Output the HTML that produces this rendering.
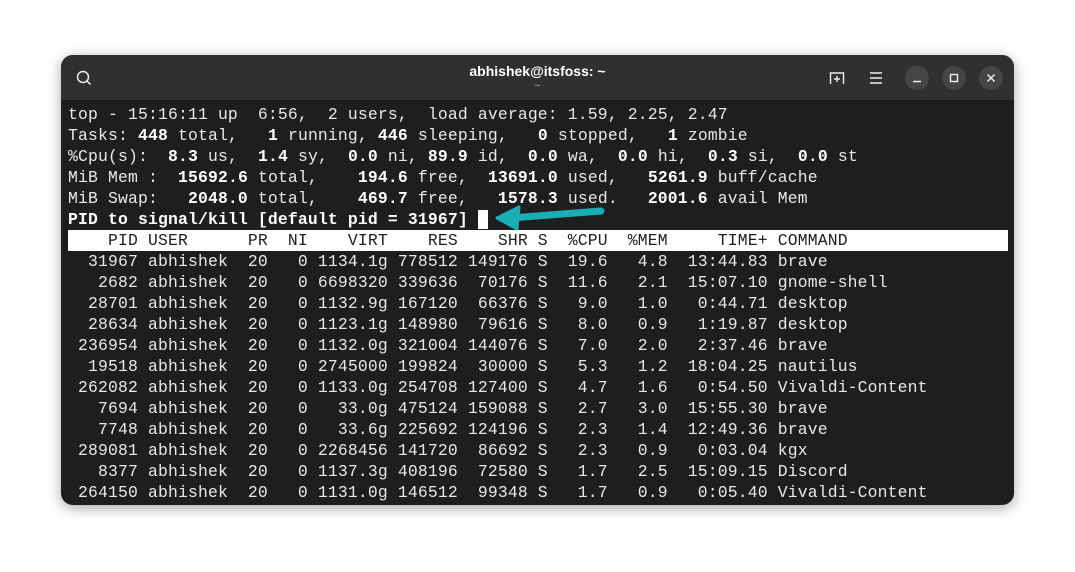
<!DOCTYPE html>
<html><head><style>
body{margin:0;width:1075px;height:572px;background:#fff;position:relative;overflow:hidden}
.win{position:absolute;left:61px;top:55px;width:953px;height:450px;background:#1e1e1e;border-radius:12px;overflow:hidden;box-shadow:0 3px 14px rgba(0,0,0,.35)}
.tb{position:absolute;left:0;top:0;right:0;height:45px;background:#303030}
.title{position:absolute;left:0;right:0;top:8px;text-align:center;color:#fff;font:bold 14px "Liberation Sans",sans-serif}
.sub{position:absolute;left:0;right:0;top:25px;text-align:center;color:#aaa;font:11px "Liberation Sans",sans-serif}
.btn{position:absolute;top:11px;width:24px;height:24px;border-radius:50%;background:#454545}
pre{position:absolute;left:7px;top:49px;margin:0;font:16.4px/21px "Liberation Mono","DejaVu Sans Mono",monospace;letter-spacing:0.16px;color:#e8e8e8}
b{color:#fff}
.hd{background:#fff;color:#1e1e1e;display:inline-block;width:940px}
</style></head><body>
<div class="win">
<div class="tb">
<svg style="position:absolute;left:15px;top:15px" width="16" height="16"><circle cx="7" cy="7" r="5.5" fill="none" stroke="#eee" stroke-width="1.5"/><line x1="11" y1="11" x2="14.5" y2="14.5" stroke="#eee" stroke-width="1.5"/></svg>
<div class="title">abhishek@itsfoss: ~</div>
<div class="sub">~</div>
<svg style="position:absolute;left:768px;top:15px" width="16" height="16"><path d="M1.5 14V3H14.5V14M5 9H11M8 6V12" fill="none" stroke="#eee" stroke-width="1.4"/></svg>
<svg style="position:absolute;left:808px;top:16px" width="14" height="14"><path d="M1 2H13M1 7H13M1 12H13" stroke="#eee" stroke-width="1.4"/></svg>
<div class="btn" style="left:844px"><svg width="24" height="24"><path d="M8 15.5H16" stroke="#eee" stroke-width="1.5"/></svg></div>
<div class="btn" style="left:881px"><svg width="24" height="24"><rect x="8.5" y="8.5" width="7" height="7" fill="none" stroke="#eee" stroke-width="1.4"/></svg></div>
<div class="btn" style="left:918px"><svg width="24" height="24"><path d="M8.5 8.5L15.5 15.5M15.5 8.5L8.5 15.5" stroke="#eee" stroke-width="1.5"/></svg></div>
</div>
<pre>top - 15:16:11 up  6:56,  2 users,  load average: 1.59, 2.25, 2.47
Tasks: <b>448</b> total,   <b>1</b> running, <b>446</b> sleeping,   <b>0</b> stopped,   <b>1</b> zombie
%Cpu(s):  <b>8.3</b> us,  <b>1.4</b> sy,  <b>0.0</b> ni, <b>89.9</b> id,  <b>0.0</b> wa,  <b>0.0</b> hi,  <b>0.3</b> si,  <b>0.0</b> st
MiB Mem :  <b>15692.6</b> total,    <b>194.6</b> free,  <b>13691.0</b> used,   <b>5261.9</b> buff/cache
MiB Swap:   <b>2048.0</b> total,    <b>469.7</b> free,   <b>1578.3</b> used.   <b>2001.6</b> avail Mem
<b>PID to signal/kill [default pid = 31967]</b> <span style="background:#fff"> </span>
<span class="hd">    PID USER      PR  NI    VIRT    RES    SHR S  %CPU  %MEM     TIME+ COMMAND</span>
  31967 abhishek  20   0 1134.1g 778512 149176 S  19.6   4.8  13:44.83 brave
   2682 abhishek  20   0 6698320 339636  70176 S  11.6   2.1  15:07.10 gnome-shell
  28701 abhishek  20   0 1132.9g 167120  66376 S   9.0   1.0   0:44.71 desktop
  28634 abhishek  20   0 1123.1g 148980  79616 S   8.0   0.9   1:19.87 desktop
 236954 abhishek  20   0 1132.0g 321004 144076 S   7.0   2.0   2:37.46 brave
  19518 abhishek  20   0 2745000 199824  30000 S   5.3   1.2  18:04.25 nautilus
 262082 abhishek  20   0 1133.0g 254708 127400 S   4.7   1.6   0:54.50 Vivaldi-Content
   7694 abhishek  20   0   33.0g 475124 159088 S   2.7   3.0  15:55.30 brave
   7748 abhishek  20   0   33.6g 225692 124196 S   2.3   1.4  12:49.36 brave
 289081 abhishek  20   0 2268456 141720  86692 S   2.3   0.9   0:03.04 kgx
   8377 abhishek  20   0 1137.3g 408196  72580 S   1.7   2.5  15:09.15 Discord
 264150 abhishek  20   0 1131.0g 146512  99348 S   1.7   0.9   0:05.40 Vivaldi-Content</pre>
<svg style="position:absolute;left:0;top:0" width="953" height="450"><path d="M540 156L450 163" stroke="#19aeb4" stroke-width="7" stroke-linecap="round"/><path d="M436 163L458 152L456 174Z" fill="#19aeb4" stroke="#19aeb4" stroke-width="3" stroke-linejoin="round"/></svg>
</div>
</body></html>
